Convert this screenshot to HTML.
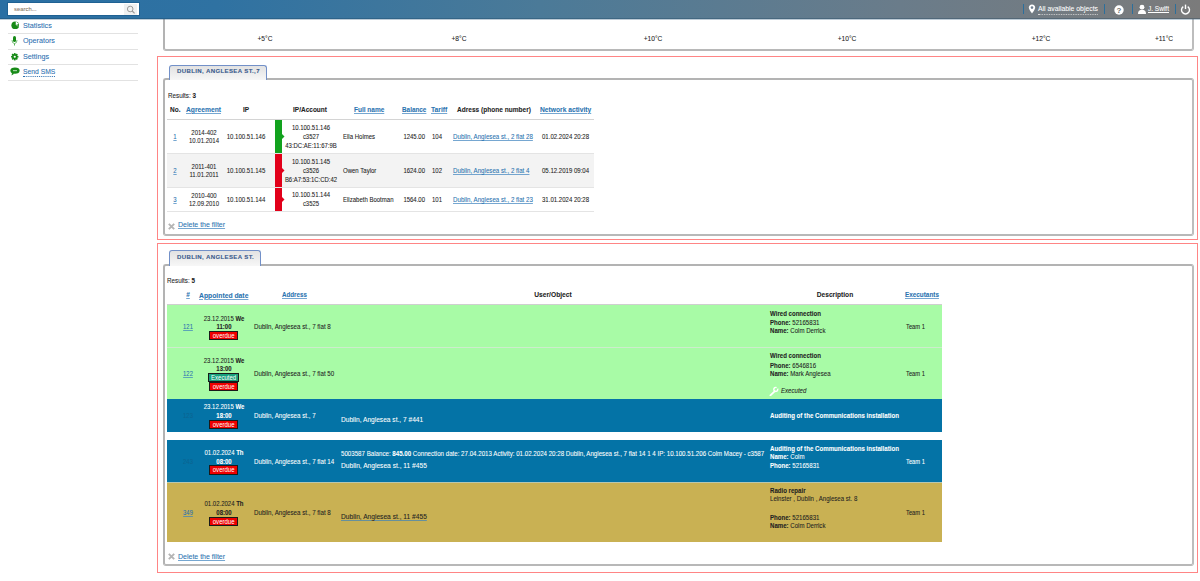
<!DOCTYPE html>
<html><head><meta charset="utf-8">
<style>
*{box-sizing:border-box;margin:0;padding:0}
html,body{width:1200px;height:581px;overflow:hidden;background:#fff}
body{position:relative;font-family:"Liberation Sans",sans-serif;color:#222;font-size:6.5px;-webkit-text-stroke:0.07px currentColor}
.a{position:absolute;white-space:nowrap}
a,.lnk{color:#2a73b0;text-decoration:underline}
.u{text-decoration:underline;text-decoration-color:rgba(60,130,190,0.7);text-decoration-thickness:0.6px}
b{font-weight:bold}
#hdr{position:absolute;left:0;top:0;width:1200px;height:19px;background:linear-gradient(to right,#2a6fa3 0%,#2f72a2 18%,#4b7a98 45%,#6a7c8a 75%,#7b7b7b 100%);border-bottom:1px solid rgba(20,60,90,0.3);box-shadow:0 1px 0 rgba(70,110,140,0.35)}
.sep{position:absolute;top:4px;width:1px;height:10px;background:#2c6f9c}
.side-sep{position:absolute;left:8px;width:130px;height:1px;background:#e2e2e2}
.side-t{position:absolute;left:23px;font-size:7.2px;color:#2a6eb0}
.card{position:absolute;border:2px solid #bdbdbd;border-color:#b3b3b3 #bdbdbd #b8b8b8 #b3b3b3;background:#fff;border-radius:3px}
.red{position:absolute;border:1px solid #ff8585}
.tab{position:absolute;height:15px;border:1px solid #7290c8;border-bottom:none;border-radius:3px 3px 0 0;background:linear-gradient(#e2e2e2,#f7f7f7);font-weight:bold;font-size:6.1px;letter-spacing:0.34px;color:#3a5a8c;padding-left:6px;line-height:9px;-webkit-text-stroke:0.08px #3a5a8c;z-index:2}
.temp{position:absolute;top:34px;font-size:8px;line-height:10px;color:#222;transform:translateX(-50%) scaleX(0.83);transform-origin:50% 0}
.c{transform:translateX(-50%)}
.hl{position:absolute;height:1px;background:#d0d0d0}
.th{font-weight:bold;color:#222}
.bd{position:absolute;height:9px;border:1px solid #222;color:#fff;font-size:6.3px;line-height:7px;text-align:center}
.od{background:#ee0000}
.ex{background:#17a07c}
</style></head><body>

<!-- SIDEBAR -->
<svg class="a" style="left:10.5px;top:21px" width="8.5" height="8.5" viewBox="0 0 9 9"><circle cx="4.5" cy="4.5" r="4.1" fill="#178a17"/><path d="M5 0.3L5 4.2L8.6 3.2Z" fill="#fff"/><path d="M5.6 4.6L8.4 5.6" stroke="#c8e8c8" stroke-width="0.6"/></svg>
<div class="side-t" style="top:21px;line-height:10px">Statistics</div>
<div class="side-sep" style="top:33px"></div>
<svg class="a" style="left:11px;top:36px" width="7" height="10" viewBox="0 0 7 10"><rect x="2" y="0" width="3" height="6" rx="1.5" fill="#178a17"/><path d="M1 4Q1 7.5 3.5 7.5Q6 7.5 6 4" fill="none" stroke="#56b056" stroke-width="0.8"/><rect x="3" y="7.5" width="1" height="2" fill="#56b056"/></svg>
<div class="side-t" style="top:36px;line-height:10px">Operators</div>
<div class="side-sep" style="top:49px"></div>
<svg class="a" style="left:11px;top:53px" width="7.5" height="7.5" viewBox="0 0 9 9"><g fill="#178a17" transform="translate(4.5 4.5)"><circle r="3.2"/><rect x="-1" y="-4.4" width="2" height="2.2" transform="rotate(0)"/><rect x="-1" y="-4.4" width="2" height="2.2" transform="rotate(45)"/><rect x="-1" y="-4.4" width="2" height="2.2" transform="rotate(90)"/><rect x="-1" y="-4.4" width="2" height="2.2" transform="rotate(135)"/><rect x="-1" y="-4.4" width="2" height="2.2" transform="rotate(180)"/><rect x="-1" y="-4.4" width="2" height="2.2" transform="rotate(225)"/><rect x="-1" y="-4.4" width="2" height="2.2" transform="rotate(270)"/><rect x="-1" y="-4.4" width="2" height="2.2" transform="rotate(315)"/></g><circle cx="4.5" cy="4.5" r="1.3" fill="#fff"/></svg>
<div class="side-t" style="top:51.5px;line-height:10px">Settings</div>
<div class="side-sep" style="top:64px"></div>
<svg class="a" style="left:10px;top:67px" width="10" height="9" viewBox="0 0 10 9"><ellipse cx="5" cy="3.6" rx="4.6" ry="3.2" fill="#178a17"/><path d="M2 6L1.5 8.6L4.5 6.5Z" fill="#178a17"/><rect x="3" y="3" width="4" height="1.2" fill="#9fd09f"/></svg>
<div class="side-t" style="top:67px;line-height:10px;border-bottom:1px dotted #2a6eb0;line-height:9px;transform:scaleX(0.94);transform-origin:0 0">Send SMS</div>
<div class="side-sep" style="top:80px"></div>

<!-- WEATHER CARD -->
<div class="card" style="left:163px;top:8px;width:1031px;height:43px"></div>
<div class="temp" style="left:265px">+5°C</div>
<div class="temp" style="left:459px">+8°C</div>
<div class="temp" style="left:653px">+10°C</div>
<div class="temp" style="left:847px">+10°C</div>
<div class="temp" style="left:1041px">+12°C</div>
<div class="temp" style="left:1164px">+11°C</div>

<!-- SECTION 1 -->
<div class="red" style="left:157px;top:56px;width:1041px;height:184px"></div>
<div class="tab" style="left:169px;top:65px;width:98px;padding-left:7px">DUBLIN, ANGLESEA ST.,7</div>
<div class="card" style="left:163px;top:78px;width:1031px;height:158px"></div>
<div class="a " style="left:167.5px;top:91px;font-size:7.12px;line-height:10px;color:#222;transform:scaleX(0.885);transform-origin:0 0;">Results: <b>3</b></div><div class="a " style="left:169.7px;top:105px;font-size:7.34px;line-height:10px;color:#222;font-weight:bold;transform:scaleX(0.885);transform-origin:0 0;">No.</div><div class="a u" style="left:185.8px;top:105px;font-size:7.57px;line-height:10px;color:#2a73b0;font-weight:bold;transform:scaleX(0.885);transform-origin:0 0;">Agreement</div><div class="a " style="left:246px;top:105px;font-size:7.34px;line-height:10px;color:#222;font-weight:bold;transform:translateX(-50%) scaleX(0.885);transform-origin:50% 0;">IP</div><div class="a " style="left:310.3px;top:105px;font-size:7.34px;line-height:10px;color:#222;font-weight:bold;transform:translateX(-50%) scaleX(0.885);transform-origin:50% 0;">IP/Account</div><div class="a u" style="left:353.8px;top:105px;font-size:7.34px;line-height:10px;color:#2a73b0;font-weight:bold;transform:scaleX(0.885);transform-origin:0 0;">Full name</div><div class="a u" style="left:401.5px;top:105px;font-size:7.19px;line-height:10px;color:#2a73b0;font-weight:bold;transform:scaleX(0.885);transform-origin:0 0;">Balance</div><div class="a u" style="left:431.3px;top:105px;font-size:7.57px;line-height:10px;color:#2a73b0;font-weight:bold;transform:scaleX(0.885);transform-origin:0 0;">Tariff</div><div class="a " style="left:456.5px;top:105px;font-size:7.41px;line-height:10px;color:#222;font-weight:bold;transform:scaleX(0.885);transform-origin:0 0;">Adress (phone number)</div><div class="a u" style="left:539.8px;top:105px;font-size:7.55px;line-height:10px;color:#2a73b0;font-weight:bold;transform:scaleX(0.885);transform-origin:0 0;">Network activity</div><div class="a" style="left:167px;top:119px;width:427px;height:1px;background:#d4d4d4;"></div><div class="a" style="left:167px;top:120px;width:427px;height:34px;background:#fff;"></div><div class="a" style="left:167px;top:153px;width:427px;height:1px;background:#e4e4e4;"></div><div class="a" style="left:275px;top:120px;width:7px;height:33px;background:#12a21e;"></div><svg class="a" style="left:282px;top:133.9px" width="3" height="5" viewBox="0 0 3 5"><path d="M0 0L2.5 2.5L0 5Z" fill="#12a21e"/></svg><div class="a u" style="left:175.3px;top:132px;font-size:6.78px;line-height:10px;color:#2a73b0;transform:translateX(-50%) scaleX(0.885);transform-origin:50% 0;">1</div><div class="a " style="left:203.8px;top:128px;font-size:6.78px;line-height:10px;color:#222;transform:translateX(-50%) scaleX(0.885);transform-origin:50% 0;">2014-402</div><div class="a " style="left:203.8px;top:136px;font-size:6.78px;line-height:10px;color:#222;transform:translateX(-50%) scaleX(0.885);transform-origin:50% 0;">10.01.2014</div><div class="a " style="left:246.2px;top:132px;font-size:6.84px;line-height:10px;color:#222;transform:translateX(-50%) scaleX(0.885);transform-origin:50% 0;">10.100.51.146</div><div class="a " style="left:310.5px;top:123px;font-size:6.72px;line-height:10px;color:#222;transform:translateX(-50%) scaleX(0.885);transform-origin:50% 0;">10.100.51.146</div><div class="a " style="left:310.5px;top:132px;font-size:6.72px;line-height:10px;color:#222;transform:translateX(-50%) scaleX(0.885);transform-origin:50% 0;">c3527</div><div class="a " style="left:310.5px;top:141px;font-size:6.72px;line-height:10px;color:#222;transform:translateX(-50%) scaleX(0.885);transform-origin:50% 0;">43:DC:AE:11:67:9B</div><div class="a " style="left:342.8px;top:132px;font-size:6.81px;line-height:10px;color:#222;transform:scaleX(0.885);transform-origin:0 0;">Ella Holmes</div><div class="a " style="left:425.3px;top:132px;font-size:6.75px;line-height:10px;color:#222;transform:translateX(-100%) scaleX(0.885);transform-origin:100% 0;">1245.00</div><div class="a " style="left:432.4px;top:132px;font-size:6.78px;line-height:10px;color:#222;transform:scaleX(0.885);transform-origin:0 0;">104</div><div class="a u" style="left:453px;top:132px;font-size:6.98px;line-height:10px;color:#2a73b0;transform:scaleX(0.885);transform-origin:0 0;">Dublin, Anglesea st., 2 flat 28</div><div class="a " style="left:541.9px;top:132px;font-size:6.83px;line-height:10px;color:#222;transform:scaleX(0.885);transform-origin:0 0;">01.02.2024 20:28</div><div class="a" style="left:167px;top:154px;width:427px;height:34px;background:#f3f3f3;"></div><div class="a" style="left:167px;top:187px;width:427px;height:1px;background:#e4e4e4;"></div><div class="a" style="left:275px;top:154px;width:7px;height:33px;background:#e2001a;"></div><svg class="a" style="left:282px;top:167.5px" width="3" height="5" viewBox="0 0 3 5"><path d="M0 0L2.5 2.5L0 5Z" fill="#e2001a"/></svg><div class="a u" style="left:175.3px;top:166px;font-size:6.78px;line-height:10px;color:#2a73b0;transform:translateX(-50%) scaleX(0.885);transform-origin:50% 0;">2</div><div class="a " style="left:203.8px;top:162px;font-size:6.78px;line-height:10px;color:#222;transform:translateX(-50%) scaleX(0.885);transform-origin:50% 0;">2011-401</div><div class="a " style="left:203.8px;top:170px;font-size:6.78px;line-height:10px;color:#222;transform:translateX(-50%) scaleX(0.885);transform-origin:50% 0;">11.01.2011</div><div class="a " style="left:246.2px;top:166px;font-size:6.84px;line-height:10px;color:#222;transform:translateX(-50%) scaleX(0.885);transform-origin:50% 0;">10.100.51.145</div><div class="a " style="left:310.5px;top:157px;font-size:6.72px;line-height:10px;color:#222;transform:translateX(-50%) scaleX(0.885);transform-origin:50% 0;">10.100.51.145</div><div class="a " style="left:310.5px;top:166px;font-size:6.72px;line-height:10px;color:#222;transform:translateX(-50%) scaleX(0.885);transform-origin:50% 0;">c3526</div><div class="a " style="left:310.5px;top:175px;font-size:6.72px;line-height:10px;color:#222;transform:translateX(-50%) scaleX(0.885);transform-origin:50% 0;">B6:A7:53:1C:CD:42</div><div class="a " style="left:342.8px;top:166px;font-size:6.81px;line-height:10px;color:#222;transform:scaleX(0.885);transform-origin:0 0;">Owen Taylor</div><div class="a " style="left:425.3px;top:166px;font-size:6.75px;line-height:10px;color:#222;transform:translateX(-100%) scaleX(0.885);transform-origin:100% 0;">1624.00</div><div class="a " style="left:432.4px;top:166px;font-size:6.78px;line-height:10px;color:#222;transform:scaleX(0.885);transform-origin:0 0;">102</div><div class="a u" style="left:453px;top:166px;font-size:6.98px;line-height:10px;color:#2a73b0;transform:scaleX(0.885);transform-origin:0 0;">Dublin, Anglesea st., 2 flat 4</div><div class="a " style="left:541.9px;top:166px;font-size:6.83px;line-height:10px;color:#222;transform:scaleX(0.885);transform-origin:0 0;">05.12.2019 09:04</div><div class="a" style="left:167px;top:188px;width:427px;height:24px;background:#fff;"></div><div class="a" style="left:167px;top:211px;width:427px;height:1px;background:#e4e4e4;"></div><div class="a" style="left:275px;top:188px;width:7px;height:23px;background:#e2001a;"></div><svg class="a" style="left:282px;top:196.5px" width="3" height="5" viewBox="0 0 3 5"><path d="M0 0L2.5 2.5L0 5Z" fill="#e2001a"/></svg><div class="a u" style="left:175.3px;top:195px;font-size:6.78px;line-height:10px;color:#2a73b0;transform:translateX(-50%) scaleX(0.885);transform-origin:50% 0;">3</div><div class="a " style="left:203.8px;top:191px;font-size:6.78px;line-height:10px;color:#222;transform:translateX(-50%) scaleX(0.885);transform-origin:50% 0;">2010-400</div><div class="a " style="left:203.8px;top:199px;font-size:6.78px;line-height:10px;color:#222;transform:translateX(-50%) scaleX(0.885);transform-origin:50% 0;">12.09.2010</div><div class="a " style="left:246.2px;top:195px;font-size:6.84px;line-height:10px;color:#222;transform:translateX(-50%) scaleX(0.885);transform-origin:50% 0;">10.100.51.144</div><div class="a " style="left:310.5px;top:190px;font-size:6.72px;line-height:10px;color:#222;transform:translateX(-50%) scaleX(0.885);transform-origin:50% 0;">10.100.51.144</div><div class="a " style="left:310.5px;top:199px;font-size:6.72px;line-height:10px;color:#222;transform:translateX(-50%) scaleX(0.885);transform-origin:50% 0;">c3525</div><div class="a " style="left:342.8px;top:195px;font-size:6.81px;line-height:10px;color:#222;transform:scaleX(0.885);transform-origin:0 0;">Elizabeth Bootman</div><div class="a " style="left:425.3px;top:195px;font-size:6.75px;line-height:10px;color:#222;transform:translateX(-100%) scaleX(0.885);transform-origin:100% 0;">1564.00</div><div class="a " style="left:432.4px;top:195px;font-size:6.78px;line-height:10px;color:#222;transform:scaleX(0.885);transform-origin:0 0;">101</div><div class="a u" style="left:453px;top:195px;font-size:6.98px;line-height:10px;color:#2a73b0;transform:scaleX(0.885);transform-origin:0 0;">Dublin, Anglesea st., 2 flat 23</div><div class="a " style="left:541.9px;top:195px;font-size:6.83px;line-height:10px;color:#222;transform:scaleX(0.885);transform-origin:0 0;">31.01.2024 20:28</div><svg class="a" style="left:167.5px;top:222.5px" width="7" height="7" viewBox="0 0 7 7"><path d="M0.8 0.8L6.2 6.2M6.2 0.8L0.8 6.2" stroke="#b5b5b5" stroke-width="1.9"/></svg><div class="a u" style="left:177.9px;top:220px;font-size:7.91px;line-height:10px;color:#2a73b0;transform:scaleX(0.885);transform-origin:0 0;">Delete the filter</div>

<!-- SECTION 2 -->
<div class="red" style="left:157px;top:243px;width:1041px;height:330px"></div>
<div class="tab" style="left:169px;top:250px;width:92px;padding-left:7px;height:16px;line-height:11px">DUBLIN, ANGLESEA ST.</div>
<div class="card" style="left:163px;top:264px;width:1031px;height:302px"></div>
<div class="a " style="left:167px;top:276px;font-size:7.12px;line-height:10px;color:#222;transform:scaleX(0.885);transform-origin:0 0;">Results: <b>5</b></div><div class="a u" style="left:188px;top:290px;font-size:7.34px;line-height:10px;color:#2a73b0;font-weight:bold;transform:translateX(-50%) scaleX(0.885);transform-origin:50% 0;">#</div><div class="a u" style="left:199px;top:291px;font-size:7.68px;line-height:10px;color:#2a73b0;font-weight:bold;transform:scaleX(0.885);transform-origin:0 0;">Appointed date</div><div class="a u" style="left:282px;top:290px;font-size:7.06px;line-height:10px;color:#2a73b0;font-weight:bold;transform:scaleX(0.885);transform-origin:0 0;">Address</div><div class="a " style="left:552.5px;top:290px;font-size:7.55px;line-height:10px;color:#222;font-weight:bold;transform:translateX(-50%) scaleX(0.885);transform-origin:50% 0;">User/Object</div><div class="a " style="left:834.5px;top:290px;font-size:7.48px;line-height:10px;color:#222;font-weight:bold;transform:translateX(-50%) scaleX(0.885);transform-origin:50% 0;">Description</div><div class="a u" style="left:905.2px;top:290px;font-size:7.2px;line-height:10px;color:#2a73b0;font-weight:bold;transform:scaleX(0.885);transform-origin:0 0;">Executants</div><div class="a" style="left:167px;top:304px;width:775px;height:1px;background:#cfcfcf;"></div><div class="a" style="left:167px;top:305px;width:775px;height:42px;background:#a8fba6;"></div><div class="a" style="left:167px;top:347px;width:775px;height:1px;background:#cdeccc;"></div><div class="a" style="left:167px;top:348px;width:775px;height:51px;background:#a8fba6;"></div><div class="a" style="left:167px;top:399px;width:775px;height:33px;background:#0473a6;"></div><div class="a" style="left:167px;top:440px;width:775px;height:42px;background:#0473a6;"></div><div class="a" style="left:167px;top:482px;width:775px;height:1px;background:#b8c8b0;"></div><div class="a" style="left:167px;top:483px;width:775px;height:59px;background:#c9b153;"></div><div class="a u" style="left:188px;top:322px;font-size:6.63px;line-height:10px;color:#2a73b0;transform:translateX(-50%) scaleX(0.885);transform-origin:50% 0;">121</div><div class="a " style="left:223.8px;top:314px;font-size:6.78px;line-height:10px;color:#222;transform:translateX(-50%) scaleX(0.885);transform-origin:50% 0;">23.12.2015 <b>We</b></div><div class="a " style="left:223.8px;top:322px;font-size:6.78px;line-height:10px;color:#222;font-weight:bold;transform:translateX(-50%) scaleX(0.885);transform-origin:50% 0;">11:00</div><div class="a" style="left:209px;top:331px;width:29px;height:9px;background:#ee0000;border:1px solid #1a1a1a;color:#fff;font-size:7px;line-height:7px;text-align:center;-webkit-text-stroke:0"><span style="display:inline-block;transform:scaleX(0.86)">overdue</span></div><div class="a " style="left:254.3px;top:322px;font-size:7.01px;line-height:10px;color:#222;transform:scaleX(0.885);transform-origin:0 0;">Dublin, Anglesea st., 7 flat 8</div><div class="a " style="left:770px;top:309px;font-size:6.89px;line-height:10px;color:#222;font-weight:bold;transform:scaleX(0.885);transform-origin:0 0;">Wired connection</div><div class="a " style="left:770px;top:318px;font-size:6.89px;line-height:10px;color:#222;transform:scaleX(0.885);transform-origin:0 0;"><b>Phone:</b> 52165831</div><div class="a " style="left:770px;top:326px;font-size:6.89px;line-height:10px;color:#222;transform:scaleX(0.885);transform-origin:0 0;"><b>Name:</b> Colm Derrick</div><div class="a " style="left:905.7px;top:322px;font-size:6.55px;line-height:10px;color:#222;transform:scaleX(0.885);transform-origin:0 0;">Team 1</div><div class="a u" style="left:188px;top:369px;font-size:6.63px;line-height:10px;color:#2a73b0;transform:translateX(-50%) scaleX(0.885);transform-origin:50% 0;">122</div><div class="a " style="left:223.8px;top:356px;font-size:6.78px;line-height:10px;color:#222;transform:translateX(-50%) scaleX(0.885);transform-origin:50% 0;">23.12.2015 <b>We</b></div><div class="a " style="left:223.8px;top:364px;font-size:6.78px;line-height:10px;color:#222;font-weight:bold;transform:translateX(-50%) scaleX(0.885);transform-origin:50% 0;">13:00</div><div class="a" style="left:208px;top:373px;width:31px;height:9px;background:#18a07c;border:1px solid #1a1a1a;color:#fff;font-size:7px;line-height:7px;text-align:center;-webkit-text-stroke:0"><span style="display:inline-block;transform:scaleX(0.86)">Executed</span></div><div class="a" style="left:209px;top:382px;width:29px;height:9px;background:#ee0000;border:1px solid #1a1a1a;color:#fff;font-size:7px;line-height:7px;text-align:center;-webkit-text-stroke:0"><span style="display:inline-block;transform:scaleX(0.86)">overdue</span></div><div class="a " style="left:254.3px;top:369px;font-size:7.01px;line-height:10px;color:#222;transform:scaleX(0.885);transform-origin:0 0;">Dublin, Anglesea st., 7 flat 50</div><div class="a " style="left:770px;top:351px;font-size:6.89px;line-height:10px;color:#222;font-weight:bold;transform:scaleX(0.885);transform-origin:0 0;">Wired connection</div><div class="a " style="left:770px;top:361px;font-size:6.89px;line-height:10px;color:#222;transform:scaleX(0.885);transform-origin:0 0;"><b>Phone:</b> 6546816</div><div class="a " style="left:770px;top:369px;font-size:6.89px;line-height:10px;color:#222;transform:scaleX(0.885);transform-origin:0 0;"><b>Name:</b> Mark Anglesea</div><svg class="a" style="left:769px;top:386px" width="10" height="10" viewBox="0 0 10 10"><path d="M1.4 9.3L5.6 5.3" stroke="#fff" stroke-width="1.8" stroke-linecap="round"/><path d="M8.6 2.6A2 2 0 1 1 7.6 1.6" stroke="#fff" stroke-width="1.4" fill="none"/></svg><div class="a " style="left:781.3px;top:386px;font-size:6.89px;line-height:10px;color:#222;transform:scaleX(0.885);transform-origin:0 0;"><i>Executed</i></div><div class="a " style="left:905.7px;top:369px;font-size:6.55px;line-height:10px;color:#222;transform:scaleX(0.885);transform-origin:0 0;">Team 1</div><div class="a " style="left:188px;top:411px;font-size:6.63px;line-height:10px;color:#0b6592;transform:translateX(-50%) scaleX(0.885);transform-origin:50% 0;">123</div><div class="a " style="left:223.8px;top:402px;font-size:6.78px;line-height:10px;color:#fff;transform:translateX(-50%) scaleX(0.885);transform-origin:50% 0;">23.12.2015 <b>We</b></div><div class="a " style="left:223.8px;top:411px;font-size:6.78px;line-height:10px;color:#fff;font-weight:bold;transform:translateX(-50%) scaleX(0.885);transform-origin:50% 0;">18:00</div><div class="a" style="left:209px;top:420px;width:29px;height:9px;background:#ee0000;border:1px solid #1a1a1a;color:#fff;font-size:7px;line-height:7px;text-align:center;-webkit-text-stroke:0"><span style="display:inline-block;transform:scaleX(0.86)">overdue</span></div><div class="a " style="left:254.3px;top:411px;font-size:7.01px;line-height:10px;color:#fff;transform:scaleX(0.885);transform-origin:0 0;">Dublin, Anglesea st., 7</div><div class="a " style="left:341.2px;top:415px;font-size:7.46px;line-height:10px;color:#fff;transform:scaleX(0.885);transform-origin:0 0;">Dublin, Anglesea st., 7 #441</div><div class="a " style="left:770px;top:411px;font-size:6.94px;line-height:10px;color:#fff;font-weight:bold;transform:scaleX(0.885);transform-origin:0 0;">Auditing of the Communications installation</div><div class="a " style="left:188px;top:457px;font-size:6.63px;line-height:10px;color:#0b6592;transform:translateX(-50%) scaleX(0.885);transform-origin:50% 0;">243</div><div class="a " style="left:223.8px;top:448px;font-size:6.78px;line-height:10px;color:#fff;transform:translateX(-50%) scaleX(0.885);transform-origin:50% 0;">01.02.2024 <b>Th</b></div><div class="a " style="left:223.8px;top:457px;font-size:6.78px;line-height:10px;color:#fff;font-weight:bold;transform:translateX(-50%) scaleX(0.885);transform-origin:50% 0;">08:00</div><div class="a" style="left:209px;top:465px;width:29px;height:10px;background:#ee0000;border:1px solid #1a1a1a;color:#fff;font-size:7px;line-height:8px;text-align:center;-webkit-text-stroke:0"><span style="display:inline-block;transform:scaleX(0.86)">overdue</span></div><div class="a " style="left:254.3px;top:457px;font-size:7.01px;line-height:10px;color:#fff;transform:scaleX(0.885);transform-origin:0 0;">Dublin, Anglesea st., 7 flat 14</div><div class="a " style="left:341.1px;top:449px;font-size:6.96px;line-height:10px;color:#fff;transform:scaleX(0.885);transform-origin:0 0;">5003587 Balance: <b>845.00</b> Connection date: 27.04.2013 Activity: 01.02.2024 20:28 Dublin, Anglesea st., 7 flat 14 1 4 IP: 10.100.51.206 Colm Macey - c3587</div><div class="a " style="left:341.2px;top:461px;font-size:7.51px;line-height:10px;color:#fff;transform:scaleX(0.885);transform-origin:0 0;">Dublin, Anglesea st., 11 #455</div><div class="a " style="left:770px;top:444px;font-size:6.94px;line-height:10px;color:#fff;font-weight:bold;transform:scaleX(0.885);transform-origin:0 0;">Auditing of the Communications installation</div><div class="a " style="left:770px;top:452px;font-size:6.89px;line-height:10px;color:#fff;transform:scaleX(0.885);transform-origin:0 0;"><b>Name:</b> Colm</div><div class="a " style="left:770px;top:461px;font-size:6.89px;line-height:10px;color:#fff;transform:scaleX(0.885);transform-origin:0 0;"><b>Phone:</b> 52165831</div><div class="a " style="left:905.7px;top:457px;font-size:6.55px;line-height:10px;color:#fff;transform:scaleX(0.885);transform-origin:0 0;">Team 1</div><div class="a u" style="left:188px;top:508px;font-size:6.63px;line-height:10px;color:#2a73b0;transform:translateX(-50%) scaleX(0.885);transform-origin:50% 0;">349</div><div class="a " style="left:223.8px;top:499px;font-size:6.78px;line-height:10px;color:#222;transform:translateX(-50%) scaleX(0.885);transform-origin:50% 0;">01.02.2024 <b>Th</b></div><div class="a " style="left:223.8px;top:508px;font-size:6.78px;line-height:10px;color:#222;font-weight:bold;transform:translateX(-50%) scaleX(0.885);transform-origin:50% 0;">08:00</div><div class="a" style="left:209px;top:517px;width:29px;height:9px;background:#ee0000;border:1px solid #1a1a1a;color:#fff;font-size:7px;line-height:7px;text-align:center;-webkit-text-stroke:0"><span style="display:inline-block;transform:scaleX(0.86)">overdue</span></div><div class="a " style="left:254.3px;top:508px;font-size:7.01px;line-height:10px;color:#222;transform:scaleX(0.885);transform-origin:0 0;">Dublin, Anglesea st., 7 flat 8</div><div class="a u" style="left:340.75px;top:512px;font-size:7.51px;line-height:10px;color:#222;transform:scaleX(0.885);transform-origin:0 0;">Dublin, Anglesea st., 11 #455</div><div class="a " style="left:770px;top:486px;font-size:6.89px;line-height:10px;color:#222;font-weight:bold;transform:scaleX(0.885);transform-origin:0 0;">Radio repair</div><div class="a " style="left:770px;top:494px;font-size:6.89px;line-height:10px;color:#222;transform:scaleX(0.885);transform-origin:0 0;">Leinster , Dublin , Anglesea st. 8</div><div class="a " style="left:770px;top:513px;font-size:6.89px;line-height:10px;color:#222;transform:scaleX(0.885);transform-origin:0 0;"><b>Phone:</b> 52165831</div><div class="a " style="left:770px;top:521px;font-size:6.89px;line-height:10px;color:#222;transform:scaleX(0.885);transform-origin:0 0;"><b>Name:</b> Colm Derrick</div><div class="a " style="left:905.7px;top:508px;font-size:6.55px;line-height:10px;color:#222;transform:scaleX(0.885);transform-origin:0 0;">Team 1</div><svg class="a" style="left:167.5px;top:552.5px" width="7" height="7" viewBox="0 0 7 7"><path d="M0.8 0.8L6.2 6.2M6.2 0.8L0.8 6.2" stroke="#b5b5b5" stroke-width="1.9"/></svg><div class="a u" style="left:177.6px;top:552px;font-size:7.91px;line-height:10px;color:#2a73b0;transform:scaleX(0.885);transform-origin:0 0;">Delete the filter</div>

<div style="position:absolute;left:0;top:0;width:1200px;height:19px;z-index:50"><!-- HEADER -->
<div id="hdr"></div>
<div class="a" style="left:7px;top:2px;width:133px;height:14px;background:#1f6193"></div>
<div class="a" style="left:8px;top:3px;width:131px;height:12px;background:#fff"></div>
<div class="a" style="left:14px;top:5px;font-size:5.9px;color:#8a7a6a;line-height:8px">search...</div>
<div class="a" style="left:124px;top:4px;width:13px;height:11px;background:#f0f1f1"></div>
<svg class="a" style="left:126px;top:5px" width="10" height="10" viewBox="0 0 10 10"><circle cx="4.2" cy="4" r="2.8" fill="none" stroke="#9a9a9a" stroke-width="1"/><line x1="6.2" y1="6" x2="8.6" y2="8.4" stroke="#9a9a9a" stroke-width="1.2"/></svg>

<div class="sep" style="left:1023px"></div>
<svg class="a" style="left:1028px;top:4px" width="8" height="10" viewBox="0 0 8 10"><path d="M4 0.5C2 0.5 0.8 2 0.8 3.6C0.8 5.6 4 9.5 4 9.5S7.2 5.6 7.2 3.6C7.2 2 6 0.5 4 0.5Z" fill="#fff"/><circle cx="4" cy="3.6" r="1.3" fill="#6f8090"/></svg>
<div class="a" style="left:1037.5px;top:4px;font-size:8px;color:#fff;line-height:10px;border-bottom:1px dotted #d8d8d8;padding-bottom:0;transform:scaleX(0.853);transform-origin:0 0">All available objects</div>
<div class="sep" style="left:1104px"></div>
<svg class="a" style="left:1114px;top:4.5px" width="10" height="10" viewBox="0 0 10 10"><circle cx="5" cy="5" r="4.7" fill="#fff"/><text x="5" y="8" font-size="8" font-weight="bold" text-anchor="middle" fill="#6f6f6f" font-family="Liberation Sans">?</text></svg>
<div class="sep" style="left:1132px"></div>
<svg class="a" style="left:1137px;top:4px" width="10" height="10" viewBox="0 0 10 10"><circle cx="5" cy="3.2" r="2.4" fill="#fff"/><path d="M1 10C1 7 2.5 5.8 5 5.8S9 7 9 10Z" fill="#fff"/></svg>
<div class="a" style="left:1147.7px;top:4px;font-size:8px;color:#fff;line-height:10px;text-decoration:underline;text-decoration-thickness:0.5px;transform:scaleX(0.814);transform-origin:0 0">J. Swift</div>
<div class="sep" style="left:1175px"></div>
<svg class="a" style="left:1180px;top:4px" width="11" height="11" viewBox="0 0 11 11"><path d="M3.3 2.6A4 4 0 1 0 7.7 2.6" fill="none" stroke="#fff" stroke-width="1.4"/><line x1="5.5" y1="0.6" x2="5.5" y2="5" stroke="#fff" stroke-width="1.4"/></svg>

</div>
</body></html>
